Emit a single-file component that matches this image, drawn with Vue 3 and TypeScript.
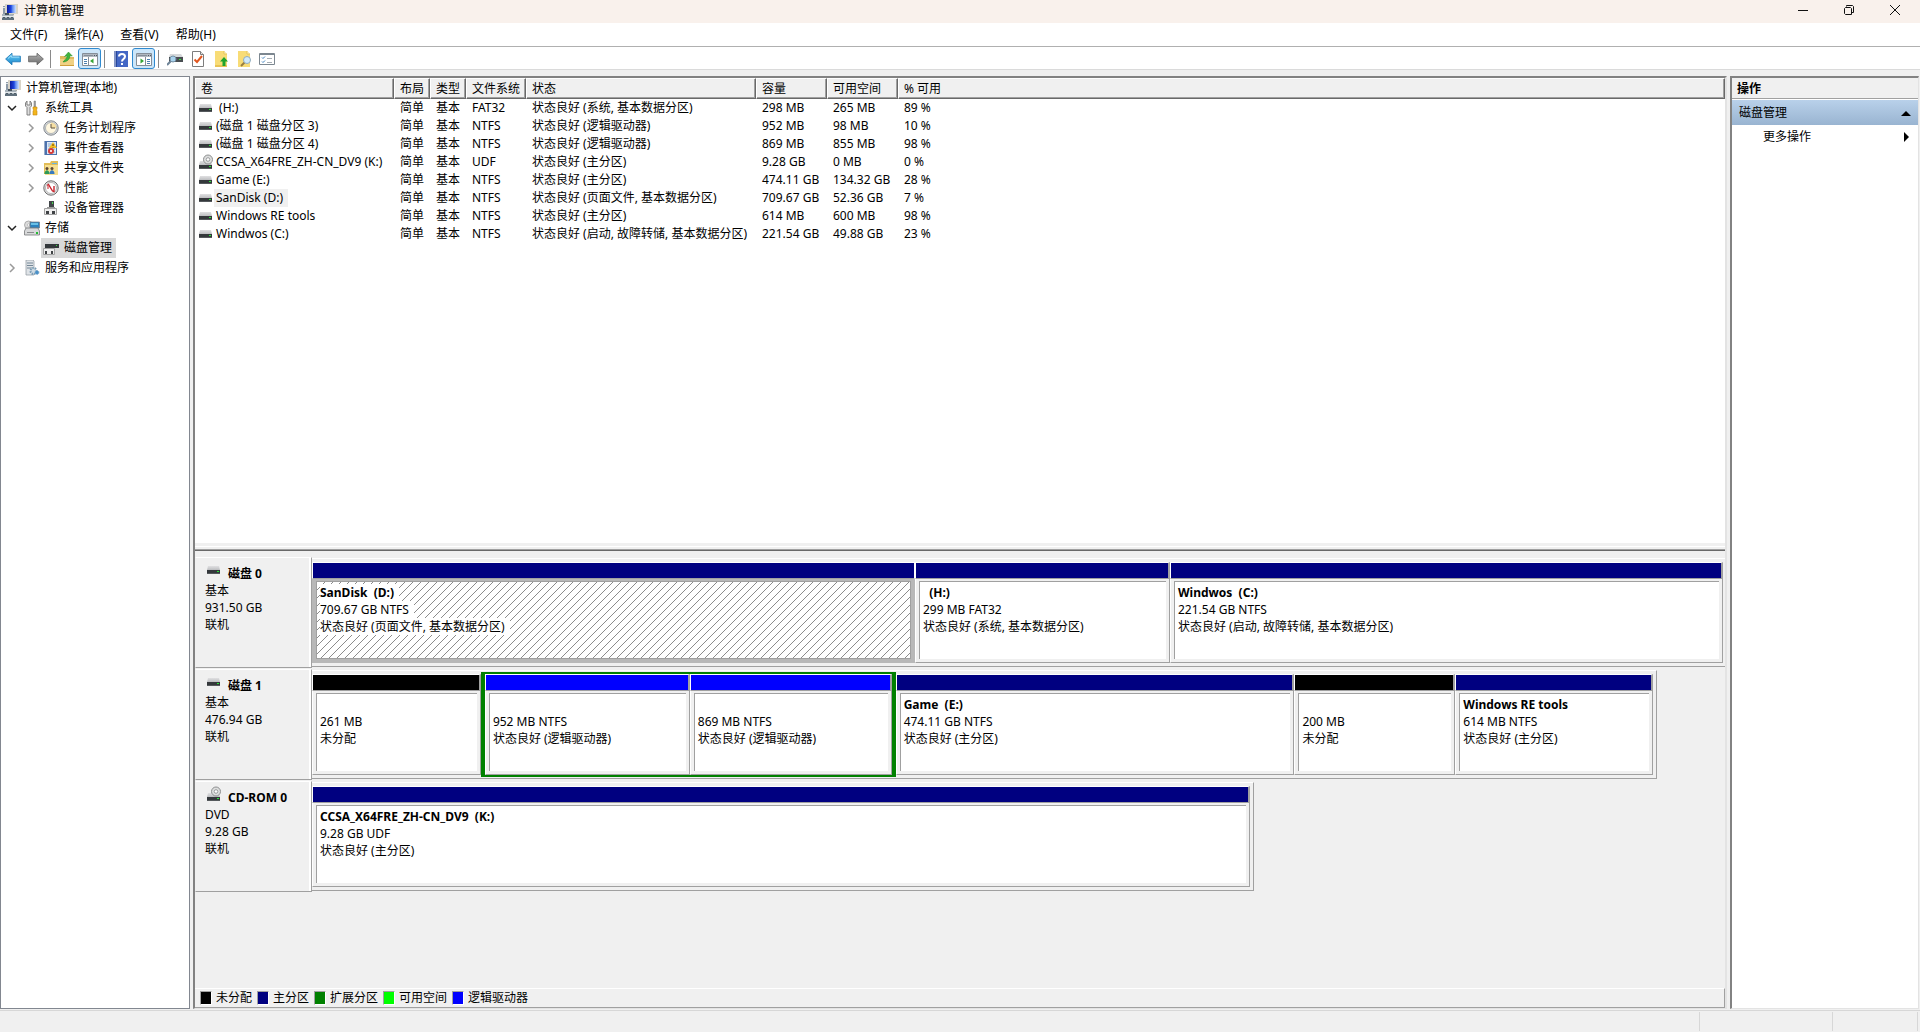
<script setup lang="ts">
interface Tool {
  icon?: string
  label?: string
  pressed?: boolean
}
interface TreeNode {
  label: string
  icon: string
  level: number
  state?: 'open' | 'closed'
  selected?: boolean
}
interface Volume {
  name: string
  icon: string
  layout: string
  type: string
  fs: string
  status: string
  capacity: string
  free: string
  percent: string
  selected?: boolean
}
interface Partition {
  title: string
  size: string
  status: string
  kind: 'primary' | 'unallocated' | 'logical'
  weight: number
  selected?: boolean
}
interface Block {
  extended?: boolean
  weight: number
  parts: Partition[]
}
interface Disk {
  name: string
  icon: string
  type: string
  size: string
  state: string
  extent: number
  blocks: Block[]
}

const menus = ['文件(F)', '操作(A)', '查看(V)', '帮助(H)']

const tools: Tool[] = [
  { icon: 'back', label: '后退' },
  { icon: 'forward', label: '前进' },
  {},
  { icon: 'folder-out', label: '上移一级' },
  { icon: 'pane-left', label: '显示/隐藏控制台树', pressed: true },
  {},
  { icon: 'help', label: '帮助' },
  { icon: 'pane-right', label: '显示/隐藏操作窗格', pressed: true },
  {},
  { icon: 'probe', label: '刷新' },
  { icon: 'check', label: '属性' },
  { icon: 'doc-up', label: '打开' },
  { icon: 'doc-find', label: '浏览' },
  { icon: 'list', label: '更多' },
]

const tree: TreeNode[] = [
  { label: '计算机管理(本地)', icon: 'computer', level: 0 },
  { label: '系统工具', icon: 'wrench', level: 1, state: 'open' },
  { label: '任务计划程序', icon: 'clock', level: 2, state: 'closed' },
  { label: '事件查看器', icon: 'events', level: 2, state: 'closed' },
  { label: '共享文件夹', icon: 'shared', level: 2, state: 'closed' },
  { label: '性能', icon: 'perf', level: 2, state: 'closed' },
  { label: '设备管理器', icon: 'device', level: 2 },
  { label: '存储', icon: 'storage', level: 1, state: 'open' },
  { label: '磁盘管理', icon: 'diskmgmt', level: 2, selected: true },
  { label: '服务和应用程序', icon: 'services', level: 1, state: 'closed' },
]

const columns = ['卷', '布局', '类型', '文件系统', '状态', '容量', '可用空间', '% 可用']

const vol = (
  name: string, fs: string, status: string, capacity: string, free: string, percent: string,
  extra: Partial<Volume> = {},
): Volume => ({ name, icon: 'drive', layout: '简单', type: '基本', fs, status, capacity, free, percent, ...extra })

const volumes: Volume[] = [
  vol(' (H:)', 'FAT32', '状态良好 (系统, 基本数据分区)', '298 MB', '265 MB', '89 %'),
  vol('(磁盘 1 磁盘分区 3)', 'NTFS', '状态良好 (逻辑驱动器)', '952 MB', '98 MB', '10 %'),
  vol('(磁盘 1 磁盘分区 4)', 'NTFS', '状态良好 (逻辑驱动器)', '869 MB', '855 MB', '98 %'),
  vol('CCSA_X64FRE_ZH-CN_DV9 (K:)', 'UDF', '状态良好 (主分区)', '9.28 GB', '0 MB', '0 %', { icon: 'cdrom' }),
  vol('Game (E:)', 'NTFS', '状态良好 (主分区)', '474.11 GB', '134.32 GB', '28 %'),
  vol('SanDisk (D:)', 'NTFS', '状态良好 (页面文件, 基本数据分区)', '709.67 GB', '52.36 GB', '7 %', { selected: true }),
  vol('Windows RE tools', 'NTFS', '状态良好 (主分区)', '614 MB', '600 MB', '98 %'),
  vol('Windwos (C:)', 'NTFS', '状态良好 (启动, 故障转储, 基本数据分区)', '221.54 GB', '49.88 GB', '23 %'),
]

const single = (
  title: string, size: string, status: string, kind: Partition['kind'], weight: number, selected = false,
): Block => ({ weight, parts: [{ title, size, status, kind, weight, selected }] })

const disks: Disk[] = [
  {
    name: '磁盘 0', icon: 'drive', type: '基本', size: '931.50 GB', state: '联机', extent: 100,
    blocks: [
      single('SanDisk  (D:)', '709.67 GB NTFS', '状态良好 (页面文件, 基本数据分区)', 'primary', 603, true),
      single('  (H:)', '299 MB FAT32', '状态良好 (系统, 基本数据分区)', 'primary', 255),
      single('Windwos  (C:)', '221.54 GB NTFS', '状态良好 (启动, 故障转储, 基本数据分区)', 'primary', 553),
    ],
  },
  {
    name: '磁盘 1', icon: 'drive', type: '基本', size: '476.94 GB', state: '联机', extent: 95.2,
    blocks: [
      single('', '261 MB', '未分配', 'unallocated', 169),
      {
        extended: true,
        weight: 407,
        parts: [
          { title: '', size: '952 MB NTFS', status: '状态良好 (逻辑驱动器)', kind: 'logical', weight: 205 },
          { title: '', size: '869 MB NTFS', status: '状态良好 (逻辑驱动器)', kind: 'logical', weight: 202 },
        ],
      },
      single('Game  (E:)', '474.11 GB NTFS', '状态良好 (主分区)', 'primary', 399),
      single('', '200 MB', '未分配', 'unallocated', 161),
      single('Windows RE tools', '614 MB NTFS', '状态良好 (主分区)', 'primary', 198),
    ],
  },
  {
    name: 'CD-ROM 0', icon: 'cdrom', type: 'DVD', size: '9.28 GB', state: '联机', extent: 66.7,
    blocks: [single('CCSA_X64FRE_ZH-CN_DV9  (K:)', '9.28 GB UDF', '状态良好 (主分区)', 'primary', 938)],
  },
]

const legend = [
  { label: '未分配', cls: 'c-unallocated' },
  { label: '主分区', cls: 'c-primary' },
  { label: '扩展分区', cls: 'c-extended' },
  { label: '可用空间', cls: 'c-free' },
  { label: '逻辑驱动器', cls: 'c-logical' },
]
</script>

<template>
  <div class="window">
    <svg class="defs" aria-hidden="true">
      <defs>
        <linearGradient id="g-blue" x1="0" y1="0" x2="0" y2="1">
          <stop offset="0" stop-color="#6fd0f7" /><stop offset="1" stop-color="#1583c9" />
        </linearGradient>
        <linearGradient id="g-grey" x1="0" y1="0" x2="0" y2="1">
          <stop offset="0" stop-color="#b4b4b4" /><stop offset="1" stop-color="#6a6a6a" />
        </linearGradient>
        <linearGradient id="g-screen" x1="0" y1="0" x2="1" y2="0">
          <stop offset="0" stop-color="#0c1a9c" /><stop offset=".45" stop-color="#1f46e0" />
          <stop offset=".6" stop-color="#5b86f0" /><stop offset="1" stop-color="#cfe2fd" />
        </linearGradient>
        <linearGradient id="g-lid" x1="0" y1="0" x2="0" y2="1">
          <stop offset="0" stop-color="#e0e0e2" /><stop offset="1" stop-color="#bcbdc0" />
        </linearGradient>
        <pattern id="hatch" width="8" height="8" patternUnits="userSpaceOnUse">
          <path d="M-1 9 9 -1M-1 1 1 -1M7 9 9 7" stroke="#8c8c8c" stroke-width="1" fill="none" />
        </pattern>
      </defs>
      <symbol id="i-computer" viewBox="0 0 16 16">
        <path d="M3 0h13v10H3z" fill="#d9d4c8" /><path d="M5 1h9v8H5z" fill="url(#g-screen)" />
        <path d="M1 2h2v8H1z" fill="#8d9aa8" /><path d="M1 3h2v1H1z" fill="#dfe6ea" /><path d="M8 10h4v1H8z" fill="#a9a9a0" />
        <path d="M0 10h10l2 2v3H0z" fill="#a9b4bc" /><path d="M0 12h12v1H0z" fill="#e4e9ec" /><path d="M0 14h12v2H0z" fill="#5f6f7b" />
        <path d="M1 13h2v1H1zM5 13h2v1H5zM9 13h2v1H9z" fill="#4f5d68" /><path d="M3 9h4v2H3z" fill="#46525c" />
      </symbol>
      <symbol id="i-back" viewBox="0 0 16 16">
        <path d="M.6 8 7 2.200v3h8.400v5.600H7v3z" fill="url(#g-blue)" stroke="#1874b4" stroke-width=".8" />
        <path d="M3 7.500 6.300 4.500v1.600h8" stroke="#b4ebff" stroke-width=".8" fill="none" />
      </symbol>
      <symbol id="i-forward" viewBox="0 0 16 16">
        <path d="M15.400 8 9 2.200v3H.6v5.600H9v3z" fill="url(#g-grey)" stroke="#606060" stroke-width=".8" />
      </symbol>
      <symbol id="i-folder-out" viewBox="0 0 16 16">
        <path d="M1 5h5l1 1h8v9H1z" fill="#e0b95f" /><path d="M1 8h14v7H1z" fill="#f0d184" />
        <path d="M1 14h14v1H1z" fill="#cf9f3c" />
        <path d="M4 11C5 9 8 8 8 5L5.500 5.500 9.500 1l3.800 4-2.300-.3C11 8 8 11 4 11z" fill="#3fb43c" stroke="#2a8a2a" stroke-width=".5" />
      </symbol>
      <symbol id="i-pane-left" viewBox="0 0 16 16">
        <path d="M.5 2.500h15v12H.5z" fill="#fff" stroke="#858e98" /><path d="M1 3h14v3H1z" fill="#b1b8c0" />
        <path d="M2 4.500h9" stroke="#858e98" /><path d="M12 4.500h1M14 4.500h1" stroke="#4d5964" />
        <path d="M6.500 6v8" stroke="#858e98" /><path d="M2 8.500h3M2 10.500h3M2 12.500h3" stroke="#4b7fae" />
        <path d="M11.500 7.500v5L8 10z" fill="#35a435" />
      </symbol>
      <symbol id="i-pane-right" viewBox="0 0 16 16">
        <path d="M.5 2.500h15v12H.5z" fill="#fff" stroke="#858e98" /><path d="M1 3h14v3H1z" fill="#b1b8c0" />
        <path d="M2 4.500h9" stroke="#858e98" /><path d="M12 4.500h1M14 4.500h1" stroke="#4d5964" />
        <path d="M9.500 6v8" stroke="#858e98" /><path d="M11 8.500h3M11 10.500h3M11 12.500h3" stroke="#4b7fae" />
        <path d="M4.500 7.500v5L8 10z" fill="#35a435" />
      </symbol>
      <symbol id="i-help" viewBox="0 0 16 16">
        <path d="M1 0h14v16H1z" fill="#27479d" /><path d="M4 0h11v16H4z" fill="#4367c5" /><path d="M1 0h2v16H1z" fill="#8294c5" />
        <path d="M6 5.500C6 2 12 2 12 5.500 12 8 9 8 9 10.500M9 12v2" stroke="#fff" stroke-width="2" fill="none" />
      </symbol>
      <symbol id="i-probe" viewBox="0 0 16 16">
        <path d="M3 3h11l2 3H2z" fill="#d6d8da" /><path d="M2 6h14v5H2z" fill="#494e52" /><path d="M12 8h2v1h-2z" fill="#32e83f" />
        <path d="M0 14l4-4" stroke="#6e8397" stroke-width="2" /><circle cx="6" cy="8" r="3" fill="#a9d3ee" stroke="#7590a5" />
      </symbol>
      <symbol id="i-check" viewBox="0 0 16 16">
        <path d="M2.500.5h8l3 3v12h-11z" fill="#fff" stroke="#7d7d7d" /><path d="M10.500.5v3h3" fill="#e5e5e5" stroke="#7d7d7d" />
        <path d="M4.500 8.500 7 11l5-6" stroke="#e2571f" stroke-width="2" fill="none" />
      </symbol>
      <symbol id="i-doc-up" viewBox="0 0 16 16">
        <path d="M2 0h9l3 3v13H2z" fill="#f8dc76" /><path d="M11 0v3h3" fill="#fff0b0" stroke="#d9b64d" stroke-width=".6" />
        <path d="M2 14h12v2H2z" fill="#e8c355" /><path d="M11 6 7 10.500h2.500V15h3v-4.500H15z" fill="#1fa52c" />
      </symbol>
      <symbol id="i-doc-find" viewBox="0 0 16 16">
        <path d="M2 0h9l3 3v13H2z" fill="#f8dc76" /><path d="M11 0v3h3" fill="#fff0b0" stroke="#d9b64d" stroke-width=".6" />
        <path d="M5 15l4-4" stroke="#987c3f" stroke-width="2" /><circle cx="11" cy="9" r="3.500" fill="#d1eafa" stroke="#91acbc" />
      </symbol>
      <symbol id="i-list" viewBox="0 0 16 16">
        <path d="M.5 2.500h15v11H.5z" fill="#fff" stroke="#7c8790" /><path d="M1 3h14v1H1z" fill="#7c8790" />
        <path d="M3 6.500 4 7.500 6 5.500M3 10.500l1 1 2-2" stroke="#3d82bf" fill="none" /><path d="M8 7.500h5M8 11.500h5" stroke="#a5adb4" />
      </symbol>
      <symbol id="i-wrench" viewBox="0 0 16 16">
        <path d="M3 1 1.500 3v3L3 7.500V15h3V7.500L7.500 6V3L6 1v4H3z" fill="#dedede" stroke="#777" stroke-width=".9" />
        <path d="M10 1h1.500v6H10z" fill="#a0a0a0" stroke="#777" stroke-width=".5" />
        <path d="M9 7h4v2l-.7 1 .7 1v4H9v-4l.7-1L9 9z" fill="#f2b51c" stroke="#c48712" stroke-width=".6" />
      </symbol>
      <symbol id="i-clock" viewBox="0 0 16 16">
        <circle cx="8" cy="8" r="7.200" fill="#d6d9dd" stroke="#83888d" /><circle cx="8" cy="8" r="5.500" fill="#fff7df" stroke="#9aa0a5" stroke-width=".7" />
        <path d="M8 8V2.500A5.500 5.500 0 0 1 13.500 8z" fill="#f5dfa4" /><path d="M8 4v4h4" stroke="#5d5043" fill="none" />
      </symbol>
      <symbol id="i-events" viewBox="0 0 16 16">
        <path d="M1 1h13v14H1z" fill="#4c72ad" /><path d="M4 2h9v12H4z" fill="#dce7f5" /><path d="M1 2h1M1 4h1M1 6h1M1 8h1M1 10h1M1 12h1M1 14h1" stroke="#e6e6e6" />
        <path d="M5 4h7M5 6h7M5 9h7M5 12h7" stroke="#8eabd0" /><path d="M10 2l4 6H6z" fill="#f5bf25" /><path d="M10 4v2M10 7v.6" stroke="#5b3b08" />
        <circle cx="8" cy="11" r="3" fill="#d53b38" /><path d="M7 10l2 2M9 10l-2 2" stroke="#fff" stroke-width=".8" />
      </symbol>
      <symbol id="i-shared" viewBox="0 0 16 16">
        <path d="M1 3h6l1-2h7v13H1z" fill="#e2bd57" /><path d="M2 5h13v10H2z" fill="#f7df91" /><path d="M9 3h5v1H9z" fill="#6bb5e0" />
        <circle cx="4" cy="8.500" r="1.500" fill="#5d4734" /><circle cx="9" cy="8.500" r="1.500" fill="#5d4734" />
        <path d="M1.500 14c0-5 5-5 5 0z" fill="#2f9a58" /><path d="M6.500 14c0-5 5-5 5 0z" fill="#377abf" />
      </symbol>
      <symbol id="i-perf" viewBox="0 0 16 16">
        <circle cx="8" cy="8" r="7.200" fill="#e4e4e4" stroke="#6c6c6c" /><circle cx="8" cy="8" r="5.500" fill="#fff" stroke="#a8a8a8" stroke-width=".8" />
        <path d="M4 5.500 5.500 4.500 9.500 11l1.500.5V6" stroke="#c8242c" stroke-width="1.400" fill="none" /><path d="M5 9v-3" stroke="#c8242c" />
      </symbol>
      <symbol id="i-device" viewBox="0 0 16 16">
        <path d="M6 1h5v7H6z" fill="#424649" /><path d="M9 2h1v2H9z" fill="#43d94c" /><path d="M4 7h8v1H4z" fill="#9a9a9a" />
        <path d="M1.500 8.500h12v6h-12z" fill="#efefef" stroke="#a2a2a2" /><path d="M3 11h3v3H3zM9 11h3v3H9z" fill="#3f4245" />
      </symbol>
      <symbol id="i-diskmgmt" viewBox="0 0 16 16">
        <path d="M3 2h11l2 2H2z" fill="#d1d2d4" /><path d="M2 4h14v4H2z" fill="#34383b" /><path d="M13 5h1v1h-1z" fill="#34e241" />
        <path d="M.5 8.500h11v6H.5z" fill="#efefef" stroke="#a2a2a2" /><path d="M2 11h2v3H2zM8 11h2v3H8z" fill="#3f4245" />
      </symbol>
      <symbol id="i-storage" viewBox="0 0 16 16">
        <circle cx="4.500" cy="5" r="4" fill="#ddd" stroke="#949494" stroke-width=".7" /><circle cx="4.500" cy="5" r="1.200" fill="#fff" stroke="#999" stroke-width=".5" />
        <path d="M6 2h9.500v6H6z" fill="#2c82bd" stroke="#73797e" stroke-width=".7" /><path d="M7 3h7v2H7z" fill="#67c0e7" />
        <path d="M2 8h12l1.500 3v4H.5v-4z" fill="#d8d9da" stroke="#77797b" stroke-width=".8" /><path d="M3 12h7v1H3z" fill="#8a8c8e" /><path d="M12 12h2v2h-2z" fill="#23bd34" />
      </symbol>
      <symbol id="i-services" viewBox="0 0 16 16">
        <path d="M2 0h7l1 1v14H2z" fill="#dfe3e7" stroke="#8e979f" stroke-width=".7" /><path d="M3 3h6M3 5.500h6M3 8h5" stroke="#748796" />
        <circle cx="9.500" cy="11" r="3" fill="#cfdbe4" stroke="#789bb4" stroke-width="2" stroke-dasharray="1.500 1" />
        <circle cx="13" cy="12.500" r="2" fill="#4a90c8" stroke="#86b0d0" stroke-dasharray="1 1" />
      </symbol>
      <symbol id="i-drive" viewBox="0 0 16 16">
        <path d="M2 4h11l1 4H1z" fill="url(#g-lid)" /><path d="M1 8h13v4H1z" fill="#34383b" /><path d="M1 11h13v1H1z" fill="#55595c" /><path d="M11 9h2v1h-2z" fill="#25e935" />
      </symbol>
      <symbol id="i-cdrom" viewBox="0 0 16 16">
        <path d="M2 7h11l1 4H1z" fill="url(#g-lid)" /><path d="M1 11h13v4H1z" fill="#34383b" /><path d="M1 14h13v1H1z" fill="#55595c" /><path d="M11 12h2v1h-2z" fill="#25e935" />
        <circle cx="10" cy="5.500" r="4.500" fill="#dcdddd" stroke="#8d8f90" /><circle cx="10" cy="5.500" r="1.800" fill="#fff" stroke="#9a9c9d" />
      </symbol>
    </svg>

    <header class="titlebar">
      <svg class="icon"><use href="#i-computer" /></svg>
      <h1>计算机管理</h1>
      <div class="caption">
        <button type="button" aria-label="最小化"><svg width="12" height="12"><path d="M1 6.500h10" /></svg></button>
        <button type="button" aria-label="还原">
          <svg width="12" height="12"><path d="M3.500 2.500V1.500H9.500L10.500 2.500V8.500H9M1.500 4.500L2.500 3.500H7.500L8.500 4.500V10.500H2.500L1.500 9.500z" /></svg>
        </button>
        <button type="button" aria-label="关闭"><svg width="12" height="12"><path d="M1 1 11 11M11 1 1 11" /></svg></button>
      </div>
    </header>

    <nav class="menubar">
      <button v-for="m in menus" :key="m" type="button">{{ m }}</button>
    </nav>

    <div class="toolbar" role="toolbar">
      <template v-for="(t, i) in tools" :key="i">
        <button v-if="t.icon" type="button" :class="{ pressed: t.pressed }" :aria-label="t.label">
          <svg class="icon"><use :href="`#i-${t.icon}`" /></svg>
        </button>
        <i v-else class="separator"></i>
      </template>
    </div>

    <main class="workspace">
      <aside class="tree">
        <ul>
          <li v-for="n in tree" :key="n.label" :class="`level-${n.level}`">
            <svg v-if="n.level" class="chevron" :class="n.state" width="10" height="10">
              <path v-if="n.state === 'open'" d="M1 3 5 7 9 3" />
              <path v-else-if="n.state === 'closed'" d="M3 1 7 5 3 9" />
            </svg>
            <button type="button" :class="{ selected: n.selected }">
              <svg class="icon"><use :href="`#i-${n.icon}`" /></svg>{{ n.label }}
            </button>
          </li>
        </ul>
      </aside>

      <section class="center">
        <div class="volumes">
          <table>
            <colgroup>
              <col class="w-name" /><col class="w-short" /><col class="w-short" /><col class="w-fs" />
              <col class="w-status" /><col class="w-size" /><col class="w-size" /><col />
            </colgroup>
            <thead>
              <tr><th v-for="c in columns" :key="c" scope="col">{{ c }}</th></tr>
            </thead>
            <tbody>
              <tr v-for="v in volumes" :key="v.name">
                <td class="name">
                  <div>
                    <svg class="icon"><use :href="`#i-${v.icon}`" /></svg><span :class="{ selected: v.selected }">{{ v.name }}</span>
                  </div>
                </td>
                <td>{{ v.layout }}</td>
                <td>{{ v.type }}</td>
                <td>{{ v.fs }}</td>
                <td>{{ v.status }}</td>
                <td>{{ v.capacity }}</td>
                <td>{{ v.free }}</td>
                <td>{{ v.percent }}</td>
              </tr>
            </tbody>
          </table>
        </div>
        <div class="splitter"></div>
        <div class="graph">
          <div class="disks">
            <div v-for="d in disks" :key="d.name" class="disk">
              <div class="disk-label">
                <h2><svg class="icon"><use :href="`#i-${d.icon}`" /></svg>{{ d.name }}</h2>
                <p>{{ d.type }}</p>
                <p>{{ d.size }}</p>
                <p>{{ d.state }}</p>
              </div>
              <div class="lane">
                <div class="extent" :style="{ width: d.extent + '%' }">
                  <div
                    v-for="(b, bi) in d.blocks" :key="bi" class="block" :class="{ extended: b.extended }"
                    :style="{ flexGrow: b.weight }"
                  >
                    <div
                      v-for="(p, pi) in b.parts" :key="pi" class="partition" :class="{ active: p.selected }"
                      :style="{ flexGrow: p.weight }"
                    >
                      <div class="bar" :class="`c-${p.kind}`"></div>
                      <div class="body">
                        <div class="sheet">
                          <svg v-if="p.selected" class="hatch"><rect width="100%" height="100%" fill="url(#hatch)" /></svg>
                          <p><b>{{ p.title }}</b></p>
                          <p><span>{{ p.size }}</span></p>
                          <p><span>{{ p.status }}</span></p>
                        </div>
                      </div>
                    </div>
                  </div>
                </div>
              </div>
            </div>
          </div>
          <ul class="legend">
            <li v-for="l in legend" :key="l.label"><i :class="l.cls"></i>{{ l.label }}</li>
          </ul>
        </div>
      </section>

      <aside class="actions">
        <h2>操作</h2>
        <button type="button" class="group">磁盘管理<svg width="10" height="6"><path d="M0 6 5 1 10 6z" /></svg></button>
        <button type="button" class="more">更多操作<svg width="6" height="10"><path d="M0 0 5 5 0 10z" /></svg></button>
      </aside>
    </main>

    <footer class="statusbar"><span class="main"></span><span class="mid"></span><span class="end"></span></footer>
  </div>
</template>

<style>
body {
  margin: 0;
  background: #f0f0f0;
}
</style>

<style scoped>
.window {
  display: flex;
  flex-direction: column;
  height: 100vh;
  overflow: hidden;
  background: #f0f0f0;
  color: #000;
  font: 12px/16px "Noto Sans", "Noto Sans CJK SC", sans-serif;
}
.defs {
  position: absolute;
  width: 0;
  height: 0;
}
.icon {
  flex: none;
  width: 16px;
  height: 16px;
}
button {
  padding: 0;
  border: 0;
  background: none;
  color: inherit;
  font: inherit;
  text-align: left;
}
h1, h2, p, ul {
  margin: 0;
  padding: 0;
  font-size: 12px;
  list-style: none;
}

.titlebar {
  display: flex;
  flex: none;
  align-items: center;
  gap: 6px;
  height: 23px;
  padding-left: 2px;
  background: #f9f1ec;
}
.titlebar h1 {
  flex: 1;
  padding-bottom: 2px;
  font-weight: 400;
}
.caption {
  display: flex;
  padding: 0 2px 3px 0;
}
.caption button {
  display: flex;
  justify-content: center;
  width: 46px;
}
.caption svg {
  fill: none;
  stroke: #111;
}

.menubar {
  display: flex;
  flex: none;
  gap: 17px;
  height: 23px;
  padding-left: 10px;
  border-bottom: 1px solid #b0b0b0;
  background: #fff;
}

.toolbar {
  display: flex;
  flex: none;
  align-items: center;
  box-sizing: border-box;
  height: 23px;
  padding: 1px 0 0 1px;
  border-bottom: 1px solid #dadada;
  background: #fff;
}
.toolbar button {
  box-sizing: border-box;
  display: flex;
  align-items: center;
  justify-content: center;
  width: 23px;
  height: 21px;
  border: 1px solid transparent;
  border-radius: 3px;
}
.toolbar .pressed {
  border-color: #2f8ad0;
  background: #cce6f9;
}
.separator {
  width: 1px;
  height: 18px;
  margin: 0 4px 0 3px;
  background: #8a8a8a;
}

.workspace {
  display: flex;
  flex: 1;
  min-height: 0;
  padding: 6px 1px 1px 0;
  border-bottom: 1px solid #d7d7d7;
}

.tree {
  box-sizing: border-box;
  flex: none;
  width: 190px;
  margin-right: 3px;
  padding-top: 1px;
  border: 1px solid #828790;
  background: #fff;
}
.tree li {
  display: flex;
  align-items: center;
  height: 20px;
  padding-left: 2px;
}
.tree .level-1 {
  padding-left: 6px;
}
.tree .level-2 {
  padding-left: 25px;
}
.tree button {
  display: flex;
  align-items: center;
  gap: 5px;
  height: 20px;
  padding: 0 4px 0 2px;
}
.tree .level-1 button,
.tree .level-2 button {
  margin-left: 5px;
}
.tree .selected {
  background: #d9d9d9;
}
.chevron {
  fill: none;
  stroke: #9a9a9a;
  stroke-width: 1.500;
}
.chevron.open {
  stroke: #222;
}

.center {
  display: flex;
  flex: 1;
  flex-direction: column;
  min-width: 0;
  border: 2px solid;
  border-width: 2px 2px 1px;
  border-color: #828282 #e3e3e3 #e3e3e3 #828282;
}
.volumes {
  flex: 465 1 0;
  min-height: 0;
  overflow: hidden;
  background: #fff;
}
table {
  width: 100%;
  border-spacing: 0;
  table-layout: fixed;
}
.w-name { width: 199px; }
.w-short { width: 36px; }
.w-fs { width: 60px; }
.w-status { width: 230px; }
.w-size { width: 71px; }
th {
  box-sizing: border-box;
  height: 21px;
  padding: 0 0 0 5px;
  border: 1px solid;
  border-color: #fff #696969 #696969 #fff;
  background: #f0f0f0;
  box-shadow: inset -1px -1px #a0a0a0;
  font-weight: 400;
  text-align: left;
  white-space: nowrap;
}
td {
  height: 18px;
  padding: 0 0 0 6px;
  line-height: 18px;
  white-space: nowrap;
}
.name {
  padding-left: 3px;
}
.name div {
  display: flex;
  align-items: center;
}
.name span {
  padding: 0 5px 0 2px;
  white-space: pre;
}
.name .selected {
  background: #f0f0f0;
}
.splitter {
  flex: none;
  height: 8px;
  box-sizing: border-box;
  border-bottom: 1px solid #696969;
  background: #f0f0f0;
  box-shadow: inset 0 3px #f0f0f0, inset 0 4px #fff, inset 0 -1px #a0a0a0;
}

.graph {
  display: flex;
  flex: 457 1 0;
  flex-direction: column;
  min-height: 0;
}
.disks {
  flex: 1;
  min-height: 0;
  padding-top: 6px;
  overflow: hidden;
}
.disk {
  display: flex;
  height: 112px;
}
.disk-label {
  box-sizing: border-box;
  flex: none;
  width: 117px;
  height: 111px;
  padding: 7px 0 0 9px;
  border: 1px solid;
  border-color: #fff #a0a0a0 #a0a0a0 #f0f0f0;
  box-shadow: inset -2px 0 #fff;
  line-height: 17px;
}
.disk-label h2 {
  display: flex;
  gap: 6px;
  padding-left: 1px;
}
.disk-label .icon {
  margin-top: -3px;
}
.lane {
  flex: 1;
  min-width: 0;
  padding-top: 1px;
}
.extent {
  box-sizing: border-box;
  display: flex;
  height: 109px;
  padding: 0 3px 0 0;
  border-top: 1px solid #fff;
  border-right: 1px solid #a0a0a0;
  border-bottom: 1px solid #a0a0a0;
}
.disk:first-child .extent {
  padding-right: 2px;
  border-right: 0;
}
.block {
  box-sizing: border-box;
  display: flex;
  flex-basis: 0;
  min-width: 0;
  padding: 3px 0;
}
.block.extended {
  margin: 1px 0;
  padding: 0;
  border: 2px solid #008000;
  border-width: 2px 4px;
}
.partition {
  display: flex;
  flex-direction: column;
  flex-basis: 0;
  min-width: 0;
}
.bar {
  box-sizing: border-box;
  flex: none;
  height: 17px;
  border: 1px solid;
  border-width: 1px 2px 1px 1px;
  border-color: #fff #a0a0a0 #a0a0a0 #fff;
}
.body {
  box-sizing: border-box;
  display: flex;
  flex: 1;
  padding: 2px 3px 3px;
  border: 1px solid;
  border-width: 0 1px 1px;
  border-color: #a0a0a0 #a0a0a0 #a0a0a0 #fff;
}
.sheet {
  position: relative;
  flex: 1;
  min-width: 0;
  padding: 2px 0 0 3px;
  overflow: hidden;
  border-top: 1px solid #a0a0a0;
  border-left: 1px solid #a0a0a0;
  background: #fff;
  line-height: 17px;
  white-space: pre;
}
.sheet p {
  position: relative;
  height: 17px;
}
.active .bar {
  border-right: 1px solid #fff;
}
.active .body {
  background: #b8b8b8;
  border-color: #b8b8b8;
}
.active .sheet {
  border: 1px solid #a0a0a0;
}
.active .sheet b,
.active .sheet span {
  display: inline-block;
  padding-right: 5px;
  background: #fff;
}
.hatch {
  position: absolute;
  inset: 0;
  width: 100%;
  height: 100%;
}
.c-unallocated { background: #000; }
.c-primary { background: #000080; }
.c-extended { background: #008000; }
.c-free { background: #0f0; }
.c-logical { background: #00f; }

.legend {
  box-sizing: border-box;
  display: flex;
  flex: none;
  align-items: center;
  gap: 5px;
  height: 20px;
  padding-left: 5px;
  border-top: 1px solid #fff;
  border-right: 1px solid #a0a0a0;
  border-bottom: 1px solid #a0a0a0;
}
.legend li {
  display: flex;
  align-items: center;
  gap: 4px;
}
.legend i {
  box-sizing: border-box;
  width: 12px;
  height: 14px;
  border: 1px solid;
  border-color: #a0a0a0 #fff #fff #a0a0a0;
}

.actions {
  box-sizing: border-box;
  flex: none;
  width: 189px;
  margin-left: 3px;
  border: 2px solid;
  border-width: 2px 1px 1px 2px;
  border-color: #828282 #e3e3e3 #e3e3e3 #828282;
  background: #fff;
}
.actions h2 {
  height: 20px;
  padding-left: 5px;
  border-bottom: 1px solid #a0a0a0;
  background: #f0f0f0;
  font-weight: 600;
  line-height: 22px;
}
.actions button {
  box-sizing: border-box;
  display: flex;
  align-items: center;
  justify-content: space-between;
  width: 100%;
  height: 25px;
  padding: 0 7px;
}
.actions .group {
  margin-top: 1px;
  background: linear-gradient(#b9d1ea, #99b4d1);
}
.actions .more {
  height: 23px;
  padding: 0 8px 0 31px;
}

.statusbar {
  display: flex;
  flex: none;
  height: 21px;
  padding: 1px 2px 1px 0;
  box-sizing: border-box;
}
.statusbar span {
  border-right: 1px solid #d7d7d7;
}
.statusbar .main { flex: 1; }
.statusbar .mid { width: 132px; }
.statusbar .end { width: 84px; }
</style>
